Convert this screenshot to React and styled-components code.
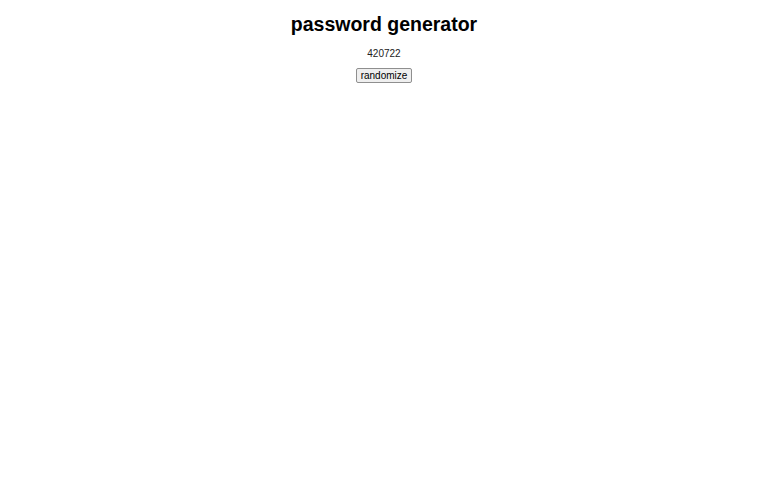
import styled, { createGlobalStyle } from "styled-components";
import { useState } from "react";

const GlobalStyle = createGlobalStyle`
  body {
    margin: 0;
    background: #fff;
    font-family: "Liberation Sans", Arial, sans-serif;
    color: #000;
  }
`;

const Page = styled.div`
  display: flex;
  flex-direction: column;
  align-items: center;
  padding-top: 13px;
`;

const Title = styled.h1`
  margin: 0;
  font-size: 19.5px;
  font-weight: bold;
  line-height: 22px;
`;

const Code = styled.div`
  margin-top: 13px;
  font-size: 10px;
  line-height: 12px;
  color: #222;
`;

const Button = styled.button`
  margin-top: 8px;
  font-family: "Liberation Sans", Arial, sans-serif;
  font-size: 10px;
  line-height: 12px;
  padding: 0 4px;
  height: 15px;
  background: #efefef;
  border: 1px solid #8f8f8f;
  border-radius: 2px;
  color: #000;
`;

const makeCode = () =>
  String(Math.floor(Math.random() * 1000000)).padStart(6, "0");

export default function App() {
  const [code, setCode] = useState("420722");
  return (
    <>
      <GlobalStyle />
      <Page>
        <Title>password generator</Title>
        <Code>{code}</Code>
        <Button onClick={() => setCode(makeCode())}>randomize</Button>
      </Page>
    </>
  );
}
